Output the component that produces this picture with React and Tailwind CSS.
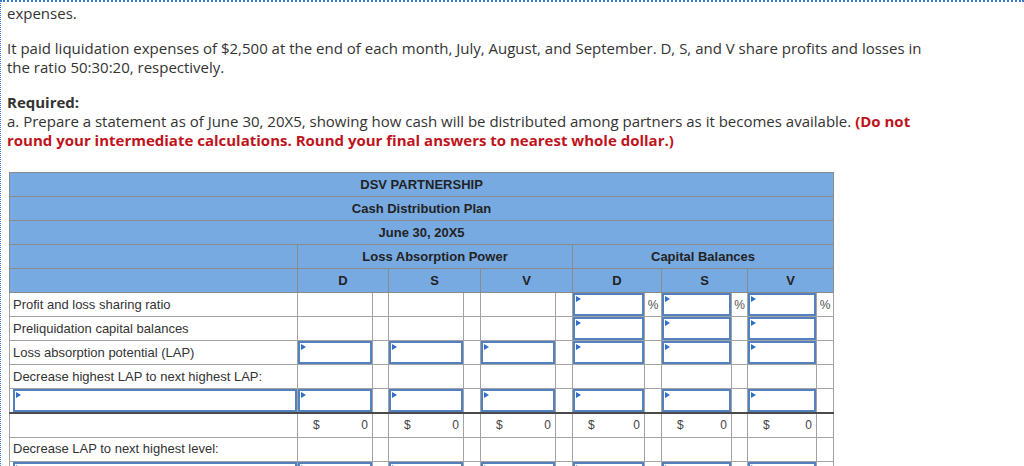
import React from "react";

const Flag = () => (
  <span className="absolute left-[1px] top-[1px] w-0 h-0 border-t-[3px] border-b-[3px] border-l-[5px] border-t-transparent border-b-transparent border-l-[#2f6fc9]" />
);

const Inp = () => (
  <div className="relative h-[23px] w-full border-2 border-[#5381bd] bg-white">
    <Flag />
  </div>
);

const td = "border border-[#a3a3a3] p-0 h-[24px] align-middle";
const th = "border border-[#8b8b8b] p-0 h-[24px] text-center font-bold text-[13px] text-[#222] bg-[#78aae2]";

function Dollar() {
  return (
    <div className="flex justify-between pl-[15px] pr-[4px] text-[12px] text-[#444]">
      <span>$</span>
      <span>0</span>
    </div>
  );
}

function Row({ label, lap, cap, pct, labelInput, thick, dollar }) {
  const b = thick ? " border-b-2 border-b-[#4a4a4a]" : "";
  const cells = [];
  for (let i = 0; i < 3; i++) {
    cells.push(
      <td key={"l" + i} className={td + b}>
        {lap ? <Inp /> : dollar ? <Dollar /> : null}
      </td>
    );
    cells.push(<td key={"ls" + i} className={td + b} />);
  }
  for (let i = 0; i < 3; i++) {
    cells.push(
      <td key={"c" + i} className={td + b}>
        {cap ? <Inp /> : dollar ? <Dollar /> : null}
      </td>
    );
    cells.push(
      <td key={"cs" + i} className={td + b + " text-center text-[12px] text-[#555]"}>
        {pct ? "%" : null}
      </td>
    );
  }
  return (
    <tr>
      <td className={td + b + " text-[13px] text-[#333] pl-[3px]"}>
        {labelInput ? <Inp /> : label}
      </td>
      {cells}
    </tr>
  );
}

export default function App() {
  return (
    <div
      className="w-[1024px] h-[466px] overflow-hidden bg-white border-t-2 border-l border-dotted border-[#3a7bd5]"
      style={{ fontFamily: "'Open Sans', Lato, sans-serif" }}
    >
      <div className="pl-[6px] pt-[2px] text-[15px] leading-[19px] text-[#333] whitespace-nowrap">
        <p>expenses.</p>
        <p className="mt-[16px]">
          It paid liquidation expenses of $2,500 at the end of each month, July, August, and September. D, S, and V share profits and losses in
          <br />
          the ratio 50:30:20, respectively.
        </p>
        <p className="mt-[16px] font-bold">Required:</p>
        <p>
          a. Prepare a statement as of June 30, 20X5, showing how cash will be distributed among partners as it becomes available.{" "}
          <span className="font-bold text-[#c0131c]">(Do not</span>
          <br />
          <span className="font-bold text-[#c0131c]">round your intermediate calculations. Round your final answers to nearest whole dollar.)</span>
        </p>
      </div>
      <table
        className="mt-[22px] ml-[8px] table-fixed border-collapse w-[825px]"
        style={{ fontFamily: "'Liberation Sans', Arial, sans-serif" }}
      >
        <colgroup>
          <col className="w-[288px]" />
          <col className="w-[75px]" />
          <col className="w-[16px]" />
          <col className="w-[75px]" />
          <col className="w-[17px]" />
          <col className="w-[75px]" />
          <col className="w-[17px]" />
          <col className="w-[72px]" />
          <col className="w-[17px]" />
          <col className="w-[70px]" />
          <col className="w-[16px]" />
          <col className="w-[69px]" />
          <col className="w-[17px]" />
        </colgroup>
        <tbody>
          <tr><td colSpan={13} className={th}>DSV PARTNERSHIP</td></tr>
          <tr><td colSpan={13} className={th}>Cash Distribution Plan</td></tr>
          <tr><td colSpan={13} className={th}>June 30, 20X5</td></tr>
          <tr>
            <td className={th} />
            <td colSpan={6} className={th}>Loss Absorption Power</td>
            <td colSpan={6} className={th}>Capital Balances</td>
          </tr>
          <tr>
            <td className={th} />
            <td colSpan={2} className={th}>D</td>
            <td colSpan={2} className={th}>S</td>
            <td colSpan={2} className={th}>V</td>
            <td colSpan={2} className={th}>D</td>
            <td colSpan={2} className={th}>S</td>
            <td colSpan={2} className={th}>V</td>
          </tr>
          <Row label="Profit and loss sharing ratio" cap pct />
          <Row label="Preliquidation capital balances" cap />
          <Row label="Loss absorption potential (LAP)" lap cap />
          <Row label="Decrease highest LAP to next highest LAP:" />
          <Row labelInput lap cap thick />
          <Row dollar />
          <Row label="Decrease LAP to next highest level:" />
          <Row labelInput lap cap />
        </tbody>
      </table>
    </div>
  );
}
